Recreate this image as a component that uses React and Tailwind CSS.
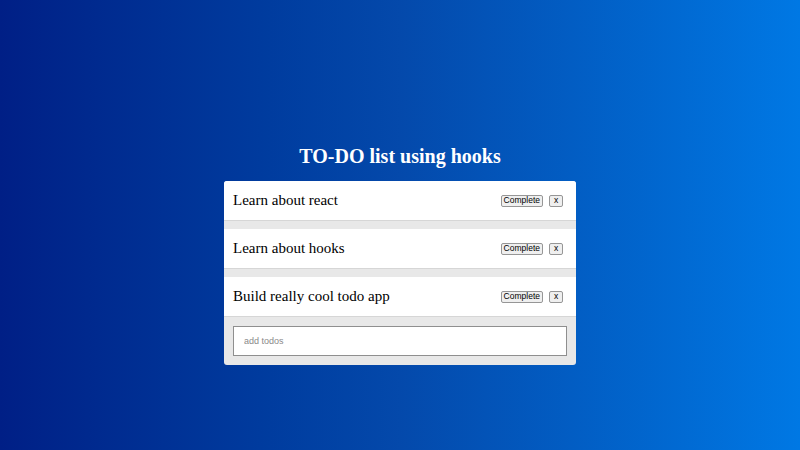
import React, { useState } from "react";

function Todo({ todo, index, completeTodo, removeTodo }) {
  return (
    <div className="flex h-[40px] items-center justify-between border-b border-[#d6d6d6] bg-white pl-[9px] pr-[13px] mb-[8px]">
      <span
        className="text-[15px] text-black"
        style={{ textDecoration: todo.isCompleted ? "line-through" : "" }}
      >
        {todo.text}
      </span>
      <div className="flex items-center gap-[6px]">
        <button
          onClick={() => completeTodo(index)}
          className="h-[12px] rounded-[2px] border border-[#969696] bg-[#efefef] px-[2px] text-[8.5px] leading-none text-black font-['Liberation_Sans',Arial,sans-serif]"
        >
          Complete
        </button>
        <button
          onClick={() => removeTodo(index)}
          className="h-[12px] w-[14px] rounded-[2px] border border-[#969696] bg-[#efefef] text-[8.5px] leading-none text-black font-['Liberation_Sans',Arial,sans-serif]"
        >
          x
        </button>
      </div>
    </div>
  );
}

function TodoForm({ addTodo }) {
  const [value, setValue] = useState("");

  const handleSubmit = (e) => {
    e.preventDefault();
    if (!value) return;
    addTodo(value);
    setValue("");
  };

  return (
    <form onSubmit={handleSubmit} className="px-[9px] pt-[1px] pb-[9px]">
      <input
        type="text"
        value={value}
        onChange={(e) => setValue(e.target.value)}
        placeholder="add todos"
        className="block h-[30px] w-full border border-[#8f8f8f] bg-white px-[10px] text-[9px] text-black outline-none placeholder:text-[#8a8a8a] font-['Liberation_Sans',Arial,sans-serif]"
      />
    </form>
  );
}

export default function App() {
  const [todos, setTodos] = useState([
    { text: "Learn about react", isCompleted: false },
    { text: "Learn about hooks", isCompleted: false },
    { text: "Build really cool todo app", isCompleted: false },
  ]);

  const addTodo = (text) => setTodos([...todos, { text, isCompleted: false }]);

  const completeTodo = (index) => {
    const next = [...todos];
    next[index].isCompleted = true;
    setTodos(next);
  };

  const removeTodo = (index) => {
    const next = [...todos];
    next.splice(index, 1);
    setTodos(next);
  };

  return (
    <div className="flex h-[450px] w-full flex-col items-center bg-gradient-to-r from-[#001f86] via-[#0449ab] to-[#0078e4] pt-[144px] font-['Liberation_Serif','Times_New_Roman',serif]">
      <h1 className="mb-[13px] text-[20px] font-bold leading-[24px] text-white">
        TO-DO list using hooks
      </h1>
      <div className="w-[352px] overflow-hidden rounded-[3px] bg-[#e8e8e8]">
        {todos.map((todo, index) => (
          <Todo
            key={index}
            index={index}
            todo={todo}
            completeTodo={completeTodo}
            removeTodo={removeTodo}
          />
        ))}
        <TodoForm addTodo={addTodo} />
      </div>
    </div>
  );
}
